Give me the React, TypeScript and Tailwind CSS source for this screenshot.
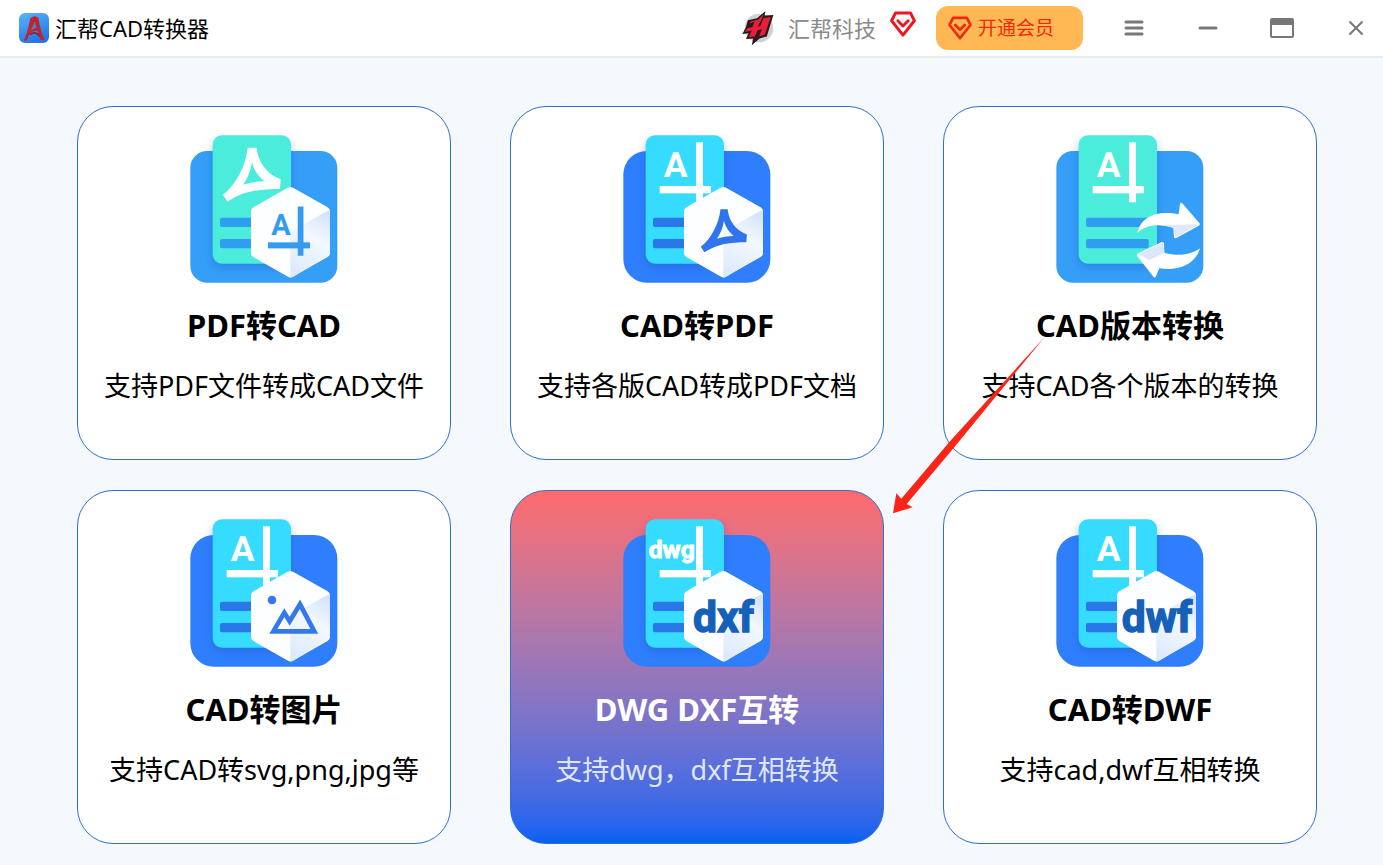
import { useId, useState } from 'react';
import type { ReactNode } from 'react';
import clsx from 'clsx';

type Theme = 'teal' | 'blue';

const themes = {
  teal: { base: '#359ff8', doc: '#4cecdc', stripe: '#2f9df0' },
  blue: { base: '#2f7ffd', doc: '#36dcff', stripe: '#2a78e8' },
};

function CadMark({ label = true }: { label?: boolean }) {
  return (
    <g>
      {label && (
        <text x="188" y="156" textAnchor="middle" fontSize="106" fontWeight="700" className="font-['Roboto',sans-serif]">A</text>
      )}
      <rect x="249" y="52" width="21" height="180" />
      <rect x="140" y="183" width="154" height="22" />
    </g>
  );
}

function PdfMark() {
  return (
    <path
      fillRule="evenodd"
      d="M203 68H230C234 110 258 145 302 163L300 192C240 192 190 198 143 230L129 209C168 180 198 120 203 68Z M216 112C212 138 204 158 190 179C212 172 230 170 253 169C235 154 223 138 216 112Z"
    />
  );
}

function Hexagon() {
  const id = useId();
  return (
    <g>
      <defs>
        <linearGradient id={id} gradientUnits="userSpaceOnUse" x1="450" y1="270" x2="340" y2="450">
          <stop offset="0" stopColor="#d3e3fc" />
          <stop offset="0.4" stopColor="#f3f8ff" />
          <stop offset="1" stopColor="#dce9fc" />
        </linearGradient>
      </defs>
      <path d="M331 200L436 259V384L331 443L227 384V259Z" fill="#fdfeff" stroke="#fdfeff" strokeWidth="28" strokeLinejoin="round" />
      <path d="M331 321L448 254Q450 258 450 265V378Q450 388 441 393L340 455Q335 458 331 457Z" fill={`url(#${id})`} />
    </g>
  );
}

function DocIcon({ theme, mark, children }: { theme: Theme; mark: ReactNode; children: ReactNode }) {
  const c = themes[theme];
  return (
    <svg viewBox="30 30 444 444" className="size-[148px]" aria-hidden="true">
      <rect x="31" y="78" width="441" height="395" rx={theme === 'teal' ? 50 : 70} fill={c.base} />
      <rect x="98" y="31" width="235" height="385" rx="28" fill={c.doc} className="drop-shadow-[0_12px_14px_rgba(20,80,200,0.35)]" />
      <rect x="120" y="278" width="188" height="28" rx="6" fill={c.stripe} />
      <rect x="120" y="342" width="188" height="28" rx="6" fill={c.stripe} />
      <g fill="#fff">{mark}</g>
      {children}
    </svg>
  );
}

function HexText({ x, children }: { x: number; children: string }) {
  return (
    <text x={x} y="368" fontSize="128" fontWeight="700" fill="#1560b8" stroke="#1560b8" strokeWidth="4" className="font-['Roboto',sans-serif]">
      {children}
    </text>
  );
}

const tools = [
  {
    title: 'PDF转CAD',
    desc: '支持PDF文件转成CAD文件',
    icon: (
      <DocIcon theme="teal" mark={<PdfMark />}>
        <Hexagon />
        <g fill="#359bf0" transform="translate(149 202) scale(.82)"><CadMark /></g>
      </DocIcon>
    ),
  },
  {
    title: 'CAD转PDF',
    desc: '支持各版CAD转成PDF文档',
    icon: (
      <DocIcon theme="blue" mark={<CadMark />}>
        <Hexagon />
        <g fill="#2f74ee" transform="translate(160 198) scale(.8)"><PdfMark /></g>
      </DocIcon>
    ),
  },
  {
    title: 'CAD版本转换',
    desc: '支持CAD各个版本的转换',
    icon: (
      <DocIcon theme="teal" mark={<CadMark />}>
        <path d="M273 325C285 275 330 255 398 268L402 236Q404 230 410 236L460 294Q464 299 457 303L391 339Q384 341 384 335L382 308C335 295 300 300 273 325Z" fill="#fff" />
        <path d="M345 300L458 298L388 339L382 308Z" fill="#dfe9fb" />
        <path d="M462 370C450 415 400 440 340 430L330 454Q326 461 321 454L274 394Q271 388 277 385L346 352Q353 349 354 356L355 383C395 395 435 390 462 370Z" fill="#fff" />
        <path d="M276 388L351 353L355 383L310 405Z" fill="#dde6fa" />
      </DocIcon>
    ),
  },
  {
    title: 'CAD转图片',
    desc: '支持CAD转svg,png,jpg等',
    icon: (
      <DocIcon theme="blue" mark={<CadMark />}>
        <Hexagon />
        <circle cx="276" cy="273" r="13" fill="#3478ea" />
        <path d="M280 367L313 311L329 337L360 286L403 367Z" fill="none" stroke="#3478ea" strokeWidth="14" />
      </DocIcon>
    ),
  },
  {
    title: 'DWG DXF互转',
    desc: '支持dwg，dxf互相转换',
    icon: (
      <DocIcon
        theme="blue"
        mark={
          <>
            <text x="107" y="148" fontSize="74" fontWeight="700" stroke="#fff" strokeWidth="3" className="font-['Roboto',sans-serif]">dwg</text>
            <CadMark label={false} />
          </>
        }
      >
        <Hexagon />
        <HexText x={240}>dxf</HexText>
      </DocIcon>
    ),
  },
  {
    title: 'CAD转DWF',
    desc: '支持cad,dwf互相转换',
    icon: (
      <DocIcon theme="blue" mark={<CadMark />}>
        <Hexagon />
        <HexText x={227}>dwf</HexText>
      </DocIcon>
    ),
  },
];

function VipIcon({ className }: { className: string }) {
  return (
    <svg viewBox="0 0 80 80" fill="none" strokeLinejoin="round" strokeWidth="9" className={className} aria-hidden="true">
      <path d="M17 6H63L75 30L40 74L5 30Z" />
      <path d="M24 30L40 46L56 30" strokeLinecap="round" />
    </svg>
  );
}

function AppLogo() {
  return (
    <svg viewBox="0 0 90 90" className="size-[30px]" aria-hidden="true">
      <defs>
        <linearGradient id="app-logo" x1="0" y1="0" x2="0.4" y2="1">
          <stop offset="0" stopColor="#58b6f8" />
          <stop offset="1" stopColor="#2478ea" />
        </linearGradient>
      </defs>
      <rect width="90" height="90" rx="18" fill="url(#app-logo)" />
      <path d="M14 84C26 60 30 34 34 16Q46 4 58 14C62 40 68 62 78 82L64 80C60 70 58 62 55 54C45 52 36 58 30 66L24 82Z" fill="#c2242f" />
      <path d="M46 24C44 36 40 44 34 54C40 49 46 46 53 45Z" fill="#4a82c8" />
      <path d="M33 66C42 56 54 58 62 70" fill="none" stroke="#8c2338" strokeWidth="5" />
    </svg>
  );
}

function CompanyLogo() {
  return (
    <svg viewBox="36 22 98 108" className="h-9 w-8" aria-hidden="true">
      <circle cx="88" cy="76" r="44" fill="#cdd2d4" />
      <path d="M108 24L105 38L132 36L112 102L90 108L66 129L70 108L48 110L56 92L37 94L48 74L54 52L82 46Z" fill="#2b1a1d" />
      <path d="M101 35L98 46L84 72L92 70L102 46L124 42L106 96L88 102L97 80L84 83L70 114L76 101L56 104L66 84L45 88L53 76L68 74L74 56L60 62L62 56L86 50Z" fill="#ea1d3c" />
    </svg>
  );
}

function PointerArrow() {
  return (
    <svg
      viewBox="95 45 462 540"
      className="pointer-events-none absolute -top-[155px] left-full z-10 ml-2 h-[180px] w-[154px]"
      aria-hidden="true"
    >
      <path d="M98 580L108 520L123 536L269 364L553 51L283 380L139 552L157 562Z" fill="#fb2418" />
    </svg>
  );
}

const windowButtons = [
  { label: '菜单', icon: <path d="M6 8H22M6 14H22M6 20H22" strokeWidth="3" /> },
  { label: '最小化', icon: <path d="M6 14H22" strokeWidth="3" /> },
  {
    label: '最大化',
    icon: (
      <>
        <rect x="3" y="5" width="22" height="18" rx="1" strokeWidth="2" />
        <path d="M4 8H24" strokeWidth="6" strokeLinecap="butt" />
      </>
    ),
  },
  { label: '关闭', icon: <path d="M8 8L20 20M20 8L8 20" strokeWidth="2" /> },
];

export default function App() {
  const [selected, setSelected] = useState('DWG DXF互转');

  return (
    <div className="min-h-screen bg-[#f5f8fc] font-['Noto_Sans','Noto_Sans_CJK_SC',sans-serif] text-black">
      <header className="flex h-[58px] items-center border-b-2 border-[#e8ebed] bg-white pr-[13px] pl-[19px]">
        <div className="flex items-center gap-1.5">
          <AppLogo />
          <h1 className="text-[22px] leading-8 whitespace-nowrap">汇帮CAD转换器</h1>
        </div>

        <div className="ml-auto flex items-center">
          <a href="#account" className="flex items-center gap-3.5 text-[22px] leading-8 whitespace-nowrap text-[#8a8a8a]">
            <CompanyLogo />
            汇帮科技
            <VipIcon className="mb-2 size-[26px] stroke-[#f0141e]" />
          </a>
          <button className="ml-5 flex h-11 w-[147px] items-center gap-1.5 rounded-xl bg-[#ffb854] px-3 text-[19px] text-[#f5280a]">
            <VipIcon className="size-6 stroke-[#f5280a]" />
            开通会员
          </button>
          <div className="ml-[37px] flex gap-[46px]">
            {windowButtons.map(({ label, icon }) => (
              <button key={label} aria-label={label} className="size-7">
                <svg viewBox="0 0 28 28" fill="none" stroke="#777" strokeLinecap="round" className="size-7">{icon}</svg>
              </button>
            ))}
          </div>
        </div>
      </header>

      <main className="pt-12 pr-[66px] pb-5 pl-[77px]">
        <ul className="grid grid-cols-3 gap-x-[59px] gap-y-[30px]">
          {tools.map(({ title, desc, icon }) => {
            const active = title === selected;
            return (
              <li key={title} className="relative">
                <button
                  onClick={() => setSelected(title)}
                  className={clsx(
                    'flex w-full flex-col items-center rounded-[36px] border border-[#2f6fd2] pt-7 pb-[53px]',
                    active ? 'bg-linear-to-b from-[#ff6a6c] to-[#0061f2] text-white' : 'bg-white'
                  )}
                >
                  {icon}
                  <span className="mt-[22px] text-[31px] leading-10 font-bold">{title}</span>
                  <span className={clsx('mt-[21px] text-[27px] leading-10', active && 'text-[#dfe6fb]')}>{desc}</span>
                </button>
                {active && <PointerArrow />}
              </li>
            );
          })}
        </ul>
      </main>
    </div>
  );
}
